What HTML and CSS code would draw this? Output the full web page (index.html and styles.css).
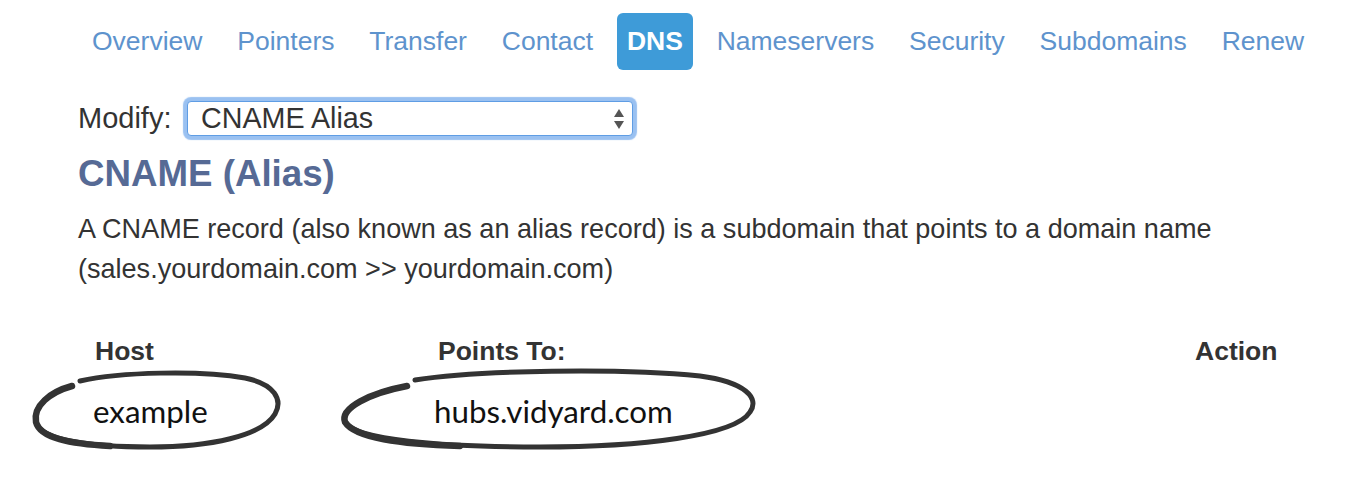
FILE: index.html
```html
<!DOCTYPE html>
<html>
<head>
<meta charset="utf-8">
<link rel="stylesheet" href="styles.css">
</head>
<body>
<div class="page">
  <nav class="tabs">
    <a class="tab">Overview</a>
    <a class="tab">Pointers</a>
    <a class="tab">Transfer</a>
    <a class="tab">Contact</a>
    <a class="tab active">DNS</a>
    <a class="tab">Nameservers</a>
    <a class="tab">Security</a>
    <a class="tab">Subdomains</a>
    <a class="tab">Renew</a>
  </nav>
  <div class="content">
    <div class="modify">
      <span class="modify-label">Modify:</span>
      <div class="select">
        <span class="select-value">CNAME Alias</span>
        <svg class="select-arrows" width="12" height="22" viewBox="0 0 12 22"><path d="M6 1 L11 9 L1 9 Z" fill="#555"/><path d="M6 21 L11 13 L1 13 Z" fill="#555"/></svg>
      </div>
    </div>
    <h1 class="title">CNAME (Alias)</h1>
    <p class="desc">A CNAME record (also known as an alias record) is a subdomain that points to a domain name (sales.yourdomain.com &gt;&gt; yourdomain.com)</p>
    <div class="records">
      <div class="rec-head">
        <div class="col-host">Host</div>
        <div class="col-points">Points To:</div>
        <div class="col-action">Action</div>
      </div>
      <div class="rec-row">
        <div class="cell-host">example</div>
        <div class="cell-points">hubs.vidyard.com</div>
        <div class="cell-action"></div>
      </div>
    </div>
  </div>
  <svg class="marks" width="1370" height="502" viewBox="0 0 1370 502">
    <g fill="none" stroke="#333" stroke-linecap="round">
      <path stroke-width="5" d="M 80 381 C 120 372, 200 370, 245 378 C 275 384, 283 400, 275 414 C 262 436, 210 447, 150 447 C 90 447, 40 440, 36 422 C 33 406, 50 392, 72 386"/>
      <path stroke-width="6.5" d="M 110 446 C 70 444, 40 438, 36 422 C 33 406, 50 392, 72 386"/>
      <path stroke-width="5" d="M 415 380 C 480 370, 620 368, 700 376 C 745 382, 760 398, 750 412 C 735 436, 640 447, 540 447 C 440 447, 355 440, 345 422 C 340 408, 370 393, 407 386"/>
      <path stroke-width="6.5" d="M 460 446 C 400 444, 355 438, 345 422 C 340 408, 370 393, 407 386"/>
    </g>
  </svg>
</div>
</body>
</html>
```

FILE: styles.css
```css
html, body {
  margin: 0;
  padding: 0;
  background: #fff;
}
.page {
  position: relative;
  width: 1370px;
  height: 502px;
  overflow: hidden;
  font-family: "Liberation Sans", Arial, sans-serif;
  color: #333;
}
.tabs {
  display: flex;
  gap: 12.8px;
  margin: 13px 0 0 81px;
  height: 57px;
}
.tab {
  display: block;
  padding: 0 11px;
  height: 57px;
  line-height: 57px;
  font-size: 26.5px;
  color: #5e93cd;
  border-radius: 6px;
}
.tab.active {
  background: #3e9bd8;
  color: #fff;
  font-weight: bold;
  padding: 0 10px;
}
.content {
  padding-left: 78px;
}
.modify {
  display: flex;
  align-items: center;
  margin-top: 27px;
  height: 43px;
}
.modify-label {
  font-size: 29px;
  width: 105px;
}
.select {
  box-sizing: border-box;
  width: 446px;
  height: 35px;
  margin-left: 4px;
  border: 1px solid #5f9de4;
  border-radius: 4px;
  box-shadow: 0 0 1px 4px rgba(120, 172, 236, 0.75);
  display: flex;
  align-items: center;
  justify-content: space-between;
  padding: 0 7px 0 13px;
  background: #fff;
}
.select-value {
  font-size: 28.7px;
}
.title {
  margin: 13px 0 0;
  font-size: 36.7px;
  line-height: 41px;
  font-weight: bold;
  color: #566a95;
}
.desc {
  margin: 15px 0 0;
  width: 1170px;
  font-size: 27.05px;
  line-height: 40px;
}
.records {
  margin-top: 47px;
}
.rec-head, .rec-row {
  display: grid;
  grid-template-columns: 343px 757px auto;
}
.rec-head {
  font-size: 26.5px;
  font-weight: bold;
  line-height: 30px;
}
.col-host, .col-points, .col-action {
  padding-left: 17px;
}
.rec-row {
  margin-top: 17px;
  height: 56px;
  align-items: center;
  font-family: Lato, "Liberation Sans", sans-serif;
  font-size: 31.3px;
  color: #111;
}
.cell-host {
  padding-left: 15px;
}
.cell-points {
  padding-left: 13px;
}
.marks {
  position: absolute;
  left: 0;
  top: 0;
  pointer-events: none;
}
```
